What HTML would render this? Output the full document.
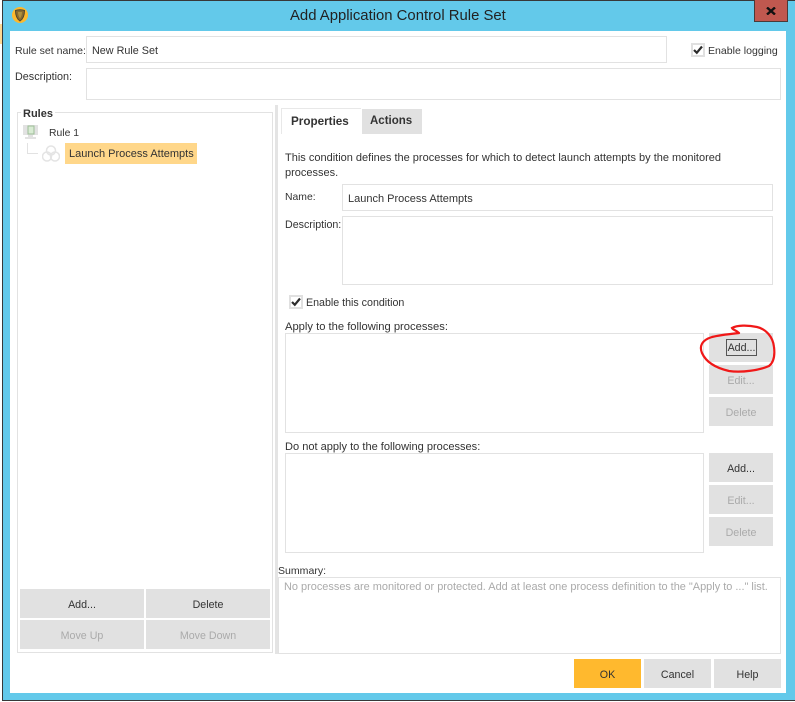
<!DOCTYPE html>
<html><head><meta charset="utf-8">
<style>
html,body{margin:0;padding:0;width:795px;height:702px;overflow:hidden;background:#fff;font-family:"Liberation Sans",Arial,sans-serif;font-size:10.67px;color:#333;}
div,span{position:absolute;box-sizing:border-box;white-space:nowrap;}
.box{background:#fff;border:1px solid #e2e2e2;}
.btn{background:#e1e1e1;text-align:center;color:#333;line-height:32px;height:29px;}
.dis{color:#aaa;}
.cb{width:14px;height:14px;background:#e0e0e0;}
.cb i{position:absolute;left:2px;top:2px;width:10px;height:10px;background:#fff;display:block;}
.cb svg{position:absolute;left:2px;top:2px;}
</style></head><body>
<div style="left:0;top:24px;width:2px;height:20px;background:#ffd993"></div>
<div style="left:2px;top:0;width:793px;height:701px;background:#63c9ea;border-left:1px solid #383838;border-top:1px solid #383838;border-bottom:1px solid #383838;border-right:0"></div>
<div style="left:10px;top:31px;width:776px;height:662px;background:#fff"></div>

<svg style="position:absolute;left:12px;top:7px" width="16" height="16" viewBox="0 0 16 16"><circle cx="8" cy="8" r="8" fill="#fdb92c"/><path d="M3.500 3.500 C6 2.500 10 2.500 12.500 3.500 C12.500 8 11 12 8 14 C5 12 3.500 8 3.500 3.500Z" fill="#8a6a2c" stroke="#4e4630" stroke-width="1"/><path d="M6 5 L10 5 C10 8 9 10 8 11.500 C7 10 6 8 6 5Z" fill="#b0903c"/></svg>
<div style="left:290px;top:7px;font-size:14.88px;color:#222;line-height:18px">Add Application Control Rule Set</div>
<div style="left:754px;top:0;width:34px;height:22px;background:#c0584f;border:1px solid #4a3a38;border-top:0;"></div>
<svg style="position:absolute;left:766px;top:7px" width="10" height="8" viewBox="0 0 10 8"><path d="M1 0.500 L9 7.500 M9 0.500 L1 7.500" stroke="#111" stroke-width="2.400"/></svg>

<div style="left:15px;top:44px;line-height:14px;font-size:10.55px">Rule set name:</div>
<div class="box" style="left:86px;top:36px;width:581px;height:27px;padding:7px 5px;line-height:14px;font-size:10.8px">New Rule Set</div>
<div class="cb" style="left:691px;top:43px"><i></i><svg width="10" height="10" viewBox="0 0 10 10"><path d="M1 5 L3.800 7.800 L9 1.500" fill="none" stroke="#2c2c2c" stroke-width="2.200"/></svg></div>
<div style="left:708px;top:44px;line-height:14px;font-size:10.55px">Enable logging</div>
<div style="left:15px;top:70px;line-height:14px;font-size:10.8px">Description:</div>
<div class="box" style="left:86px;top:68px;width:695px;height:32px"></div>

<div style="left:17px;top:112px;width:256px;height:541px;border:1px solid #e2e2e2"></div>
<div style="left:21px;top:107px;padding:0 2px;background:#fff;font-weight:bold;line-height:14px;font-size:11px">Rules</div>
<svg style="position:absolute;left:23px;top:125px" width="16" height="14" viewBox="0 0 16 14"><rect x="0" y="0" width="15" height="10" fill="#e2e2e2"/><rect x="5" y="1" width="6" height="8" fill="#d9ecd4" stroke="#9dbd98" stroke-width="1"/><rect x="5" y="10" width="5" height="2" fill="#e2e2e2"/><rect x="2" y="12" width="11" height="2" fill="#e2e2e2"/></svg>
<div style="left:49px;top:127px;line-height:14px;font-size:10.4px">Rule 1</div>
<div style="left:27px;top:143px;width:11px;height:11px;border-left:1px solid #e2e2e2;border-bottom:1px solid #e2e2e2"></div>
<svg style="position:absolute;left:42px;top:145px" width="18" height="17" viewBox="0 0 18 17"><g fill="#fff" stroke="#e4e4e4" stroke-width="1.500"><circle cx="9" cy="5.500" r="4.500"/><circle cx="5" cy="11.500" r="4.500" fill="none"/><circle cx="13" cy="11.500" r="4.500" fill="none"/></g></svg>
<div style="left:65px;top:143px;width:132px;height:21px;background:#ffd78a;padding-left:4px;line-height:23px;font-size:11px">Launch Process Attempts</div>

<div class="btn" style="left:20px;top:589px;width:124px">Add...</div>
<div class="btn" style="left:146px;top:589px;width:124px">Delete</div>
<div class="btn dis" style="left:20px;top:620px;width:124px">Move Up</div>
<div class="btn dis" style="left:146px;top:620px;width:124px">Move Down</div>

<div style="left:275px;top:105px;width:3px;height:549px;background:#e4e4e4"></div>

<div style="left:281px;top:108px;width:80px;height:26px;border-left:1px solid #e8e8e8;border-top:1px solid #e8e8e8;font-weight:bold;line-height:26px;padding-left:9px;font-size:11.7px">Properties</div>
<div style="left:362px;top:109px;width:60px;height:25px;background:#e1e1e1;font-weight:bold;line-height:25px;padding-left:8px;font-size:11.5px">Actions</div>

<div style="left:285px;top:151px;line-height:15px;font-size:11px">This condition defines the processes for which to detect launch attempts by the monitored<br>processes.</div>
<div style="left:285px;top:191px;line-height:14px;font-size:10.4px">Name:</div>
<div class="box" style="left:342px;top:184px;width:431px;height:27px;padding:7px 5px;line-height:14px;font-size:11px">Launch Process Attempts</div>
<div style="left:285px;top:218px;line-height:14px">Description:</div>
<div class="box" style="left:342px;top:216px;width:431px;height:69px"></div>

<div class="cb" style="left:289px;top:295px"><i></i><svg width="10" height="10" viewBox="0 0 10 10"><path d="M1 5 L3.800 7.800 L9 1.500" fill="none" stroke="#2c2c2c" stroke-width="2.200"/></svg></div>
<div style="left:306px;top:296px;line-height:14px">Enable this condition</div>
<div style="left:285px;top:320px;line-height:14px;font-size:11.2px">Apply to the following processes:</div>
<div class="box" style="left:285px;top:333px;width:419px;height:100px"></div>
<div class="btn" style="left:709px;top:333px;width:64px"><span style="left:17px;top:6px;width:31px;height:17px;border:1px solid #555;line-height:17px">Add...</span></div>
<div class="btn dis" style="left:709px;top:365px;width:64px">Edit...</div>
<div class="btn dis" style="left:709px;top:397px;width:64px">Delete</div>

<div style="left:285px;top:440px;line-height:14px;font-size:11.05px">Do not apply to the following processes:</div>
<div class="box" style="left:285px;top:453px;width:419px;height:100px"></div>
<div class="btn" style="left:709px;top:453px;width:64px">Add...</div>
<div class="btn dis" style="left:709px;top:485px;width:64px">Edit...</div>
<div class="btn dis" style="left:709px;top:517px;width:64px">Delete</div>

<div style="left:278px;top:564px;line-height:14px;font-size:10.55px">Summary:</div>
<div class="box" style="left:278px;top:577px;width:503px;height:77px;padding:2px 5px;line-height:14px;color:#aaa;font-size:10.95px">No processes are monitored or protected. Add at least one process definition to the "Apply to ..." list.</div>

<div style="left:574px;top:659px;width:67px;height:29px;background:#ffb92e;text-align:center;line-height:32px">OK</div>
<div class="btn" style="left:644px;top:659px;width:67px">Cancel</div>
<div class="btn" style="left:714px;top:659px;width:67px">Help</div>

<svg style="position:absolute;left:0;top:0;pointer-events:none" width="795" height="702" viewBox="0 0 795 702"><path d="M739 333 C736 330 733 330 732 328 C737 325 748 325 757 327 C766 329 773 337 774 347 C775 355 774 362 769 366 C760 370 742 373 729 371 C716 368 706 362 702 353 C699 346 702 340 712 337 C720 335 730 334 739 333" fill="none" stroke="#f01818" stroke-width="2.200" stroke-linecap="round"/></svg>
</body></html>
